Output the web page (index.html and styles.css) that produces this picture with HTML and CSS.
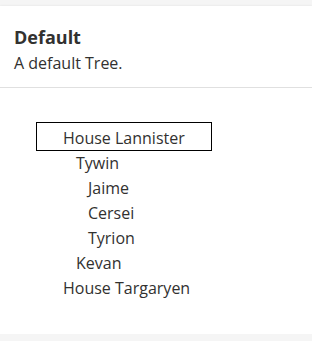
FILE: index.html
```html
<!DOCTYPE html>
<html lang="en">
<head>
  <meta charset="UTF-8" />
  <title>Tree</title>
  <link rel="stylesheet" href="styles.css">
</head>
<body>
  <div class="card">
    <div class="card-header">
      <h2>Default</h2>
      <p>A default Tree.</p>
    </div>
    <div class="card-body">
      <ul class="tree">
        <li class="tree-item focused">House Lannister</li>
        <li class="tree-item level-2">Tywin</li>
        <li class="tree-item level-3">Jaime</li>
        <li class="tree-item level-3">Cersei</li>
        <li class="tree-item level-3">Tyrion</li>
        <li class="tree-item level-2">Kevan</li>
        <li class="tree-item">House Targaryen</li>
      </ul>
    </div>
  </div>
</body>
</html>
```
FILE: styles.css
```css
body {
  margin: 0;
  background-color: #f5f5f5;
  font-family: "Open Sans", "Noto Sans", sans-serif;
  color: #323130;
}

.card {
  margin-top: 6px;
  height: 328px;
  background-color: #fff;
  box-shadow: 0 1px 3px rgba(0, 0, 0, 0.18);
}

.card-header {
  padding: 18px 14px 13px;
  border-bottom: 1px solid #e0e0e0;
}

.card-header h2 {
  margin: 0;
  font-size: 18px;
  font-weight: 700;
  line-height: 26px;
}

.card-header p {
  margin: 2px 0 0;
  font-size: 16px;
  line-height: 22px;
}

.card-body {
  padding: 36px 38px 0;
}

.tree {
  list-style: none;
  margin: 0;
  padding: 0;
  width: 172px;
}

.tree-item {
  height: 25px;
  padding-top: 3px;
  box-sizing: border-box;
  line-height: 22px;
  padding-left: 25px;
  font-size: 16px;
}

.tree-item.level-2 {
  padding-left: 38px;
}

.tree-item.level-3 {
  padding-left: 50px;
}

.tree-item.focused {
  outline: 1px solid #000;
  outline-offset: 1px;
}
```
